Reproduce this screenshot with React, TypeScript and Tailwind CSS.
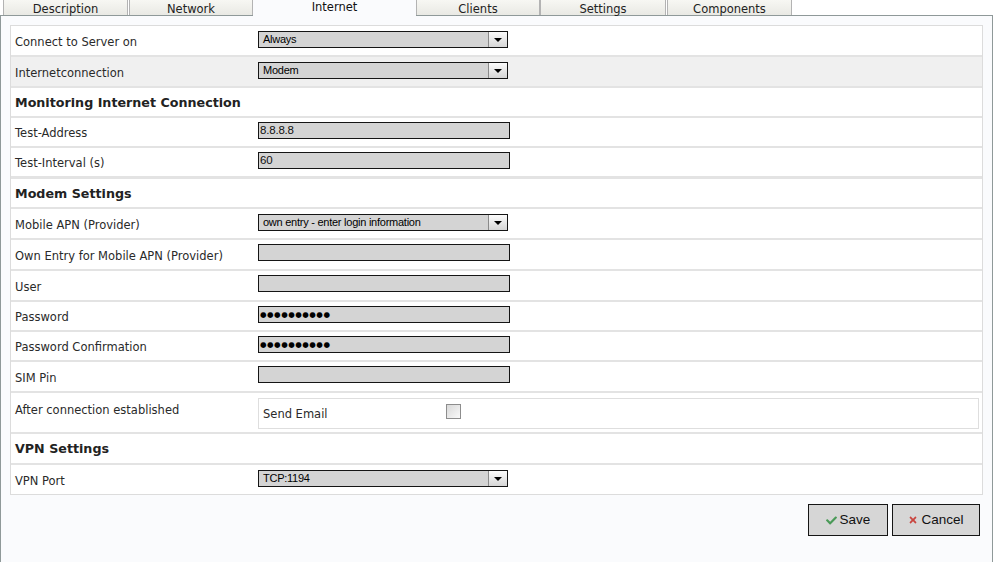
import React from "react";
import { FaCheck, FaTimes } from "react-icons/fa";

const tabBase =
  "h-[15px] border-x border-[#b3b3b3] bg-gradient-to-b from-[#f7f7f3] to-[#e9e9e4] text-center leading-[15px] pt-[2px] text-[#222]";

function Select({ value }: { value: string }) {
  return (
    <div className="w-[250px] h-[17px] mb-[2px] border border-[#151515] bg-[#d4d4d4] flex items-center justify-between">
      <span className="pl-[4px] text-[11px] leading-[15px] tracking-[-0.25px] text-black font-['Liberation_Sans',Arial,sans-serif]">
        {value}
      </span>
      <div className="w-[19px] h-[15px] border-l border-[#8a8a8a] bg-gradient-to-b from-[#fbfbfb] to-[#d6d6d6] flex items-center justify-center">
        <div className="w-0 h-0 border-l-[4px] border-r-[4px] border-t-[4px] border-l-transparent border-r-transparent border-t-black" />
      </div>
    </div>
  );
}

function Input({ value, password }: { value?: string; password?: boolean }) {
  return (
    <div className="w-[252px] h-[17px] mb-[4px] border border-[#151515] bg-[#d4d4d4] flex items-center overflow-hidden">
      {password ? (
        <span className="pl-[1px] text-[7.5px] leading-[15px] tracking-[0.5px] text-black font-['DejaVu_Sans',sans-serif]">
          ●●●●●●●●●●
        </span>
      ) : (
        <span className="pl-[1px] text-[11.5px] leading-[15px] tracking-[-0.2px] text-[#111] font-['Liberation_Sans',Arial,sans-serif]">
          {value}
        </span>
      )}
    </div>
  );
}

function Row({
  label,
  children,
  cls,
}: {
  label: string;
  children?: React.ReactNode;
  cls: string;
}) {
  return (
    <div className={"flex items-center " + cls}>
      <div className="w-[247px] pl-[4px] pt-[4px] text-[11.5px] text-[#2a2a2a]">{label}</div>
      {children}
    </div>
  );
}

function Heading({ text, cls }: { text: string; cls: string }) {
  return (
    <div className={"flex items-center pl-[4px] pt-[1px] text-[12.7px] font-bold text-[#222] " + cls}>
      {text}
    </div>
  );
}

export default function App() {
  return (
    <div className="w-[994px] h-[562px] bg-white overflow-hidden flex flex-col font-['DejaVu_Sans',Verdana,sans-serif]">
      {/* Tabs */}
      <div className="flex h-[15px] items-start text-[11.5px] relative z-10">
        <div className={tabBase + " ml-[3px] w-[125px]"}>Description</div>
        <div className={tabBase + " ml-[1px] w-[124px]"}>Network</div>
        <div className="w-[163px] h-[16px] bg-[#fafbfd] text-center leading-[14px] text-[#111]">
          Internet
        </div>
        <div className={tabBase + " w-[124px]"}>Clients</div>
        <div className={tabBase + " w-[126px]"}>Settings</div>
        <div className={tabBase + " ml-[1px] w-[125px]"}>Components</div>
      </div>

      {/* Panel */}
      <div className="flex-1 w-[993px] border-t border-l border-r border-[#8f9999] bg-[#fafbfd] flex flex-col">
        <div className="ml-[9px] mt-[9px] w-[973px] border border-[#dcdcdc] bg-white flex flex-col">
          <Row label="Connect to Server on" cls="h-[31px] border-b-2 border-[#e3e3e3]">
            <Select value="Always" />
          </Row>
          <Row label="Internetconnection" cls="h-[31px] border-b-2 border-[#e3e3e3] bg-[#f0f0f0]">
            <Select value="Modem" />
          </Row>
          <Heading text="Monitoring Internet Connection" cls="h-[30px] border-b-2 border-[#e3e3e3]" />
          <Row label="Test-Address" cls="h-[30px] border-b-2 border-[#e3e3e3]">
            <Input value="8.8.8.8" />
          </Row>
          <Row label="Test-Interval (s)" cls="h-[31px] border-b-[3px] border-[#e3e3e3]">
            <Input value="60" />
          </Row>
          <Heading text="Modem Settings" cls="h-[30px] border-b-2 border-[#e3e3e3]" />
          <Row label="Mobile APN (Provider)" cls="h-[31px] border-b-2 border-[#e3e3e3]">
            <Select value="own entry - enter login information" />
          </Row>
          <Row label="Own Entry for Mobile APN (Provider)" cls="h-[31px] border-b-2 border-[#e3e3e3]">
            <Input value="" />
          </Row>
          <Row label="User" cls="h-[31px] border-b-2 border-[#e3e3e3]">
            <Input value="" />
          </Row>
          <Row label="Password" cls="h-[30px] border-b-2 border-[#e3e3e3]">
            <Input password />
          </Row>
          <Row label="Password Confirmation" cls="h-[30px] border-b-2 border-[#e3e3e3]">
            <Input password />
          </Row>
          <Row label="SIM Pin" cls="h-[31px] border-b-2 border-[#e3e3e3]">
            <Input value="" />
          </Row>
          <div className="flex items-start h-[41px] border-b-2 border-[#e3e3e3]">
            <div className="w-[247px] pl-[4px] pt-[10px] leading-[15px] text-[11.5px] text-[#2a2a2a]">
              After connection established
            </div>
            <div className="mt-[5px] w-[721px] h-[31px] border border-[#dedede] bg-white flex items-center">
              <div className="w-[187px] pl-[4px] pt-[2px] text-[11.5px] text-[#2a2a2a]">Send Email</div>
              <div className="w-[15px] h-[15px] mb-[4px] border border-[#8d8d8d] bg-gradient-to-br from-[#d9d9d9] to-[#f9f9f9]" />
            </div>
          </div>
          <Heading text="VPN Settings" cls="h-[31px] border-b-2 border-[#e3e3e3]" />
          <Row label="VPN Port" cls="h-[29px]">
            <Select value="TCP:1194" />
          </Row>
        </div>

        {/* Buttons */}
        <div className="flex justify-end gap-[4px] mt-[9px] pr-[12px] font-['Liberation_Sans',Arial,sans-serif]">
          <button className="w-[80px] h-[32px] border border-[#151515] bg-[#d6d6d6] flex items-center justify-center gap-[3px] text-[13.5px] text-[#111]">
            <FaCheck className="w-[11px] h-[11px] text-[#4a9a58]" />
            Save
          </button>
          <button className="w-[88px] h-[32px] border border-[#151515] bg-[#d6d6d6] flex items-center justify-center gap-[3px] text-[13.5px] text-[#111]">
            <FaTimes className="w-[10px] h-[10px] text-[#c9453f]" />
            Cancel
          </button>
        </div>
      </div>
    </div>
  );
}
